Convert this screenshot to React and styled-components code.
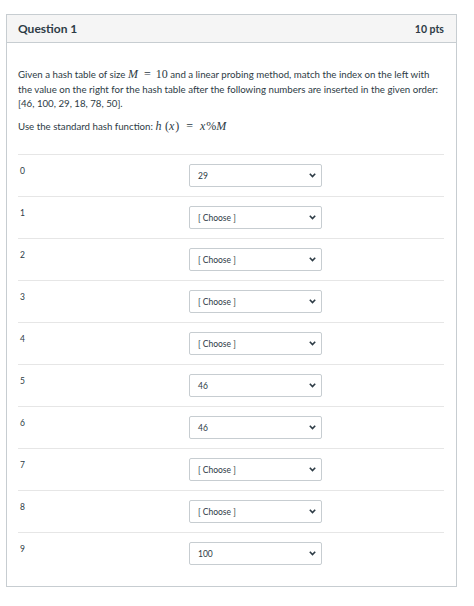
import styled, { createGlobalStyle } from "styled-components";

const Global = createGlobalStyle`
  body {
    margin: 0;
    background: #fff;
    font-family: Lato, "Open Sans", sans-serif;
    color: #2d3b45;
  }
`;

const Page = styled.div`
  padding: 14px 17px 20px 6px;
`;

const Card = styled.div`
  border: 1px solid #c7cdd1;
`;

const Header = styled.div`
  display: flex;
  justify-content: space-between;
  align-items: center;
  height: 27px;
  padding: 0 12px 0 11px;
  background: #f5f5f5;
  border-bottom: 1px solid #c7cdd1;
`;

const Title = styled.span`
  font-weight: 700;
  font-size: 12px;
`;

const Points = styled.span`
  font-weight: 700;
  font-size: 10.5px;
`;

const Body = styled.div`
  padding: 24px 12px 12px 11px;
`;

const Text = styled.p`
  margin: 0 2px 8px 0;
  font-size: 9.7px;
  line-height: 14.5px;
`;

const Math = styled.span`
  font-family: "Liberation Serif", serif;
  font-size: 12px;
  line-height: 1;
  font-style: ${(p) => (p.upright ? "normal" : "italic")};
  margin: ${(p) => (p.pad ? `0 ${p.pad}px` : p.upright ? "0" : "0 1px 0 0")};
`;

const Rows = styled.div`
  margin-top: 21px;
`;

const Row = styled.div`
  display: grid;
  grid-template-columns: 171px 133px;
  height: 42px;
  border-top: 1px solid #e6e6e6;
  box-sizing: border-box;
`;

const Label = styled.span`
  font-size: 8.5px;
  padding: 11px 0 0 2px;
`;

const SelectBox = styled.div`
  position: relative;
  margin-top: 9px;
  height: 23px;
  box-sizing: border-box;
  border: 1px solid #c7cdd1;
  border-radius: 2px;
  display: flex;
  align-items: center;
  padding-left: 8px;
  font-size: 8.5px;
  color: #2d3b45;
  background: #fff;
`;

const Chevron = styled.svg`
  position: absolute;
  right: 5px;
  top: 8px;
`;

const rows = ["29", "[ Choose ]", "[ Choose ]", "[ Choose ]", "[ Choose ]", "46", "46", "[ Choose ]", "[ Choose ]", "100"];

export default function App() {
  return (
    <Page>
      <Global />
      <Card>
        <Header>
          <Title>Question 1</Title>
          <Points>10 pts</Points>
        </Header>
        <Body>
          <Text>
            Given a hash table of size <Math>M</Math>
            <Math upright pad={5}>=</Math>
            <Math upright>10</Math> and a linear probing method, match the index on the left with the value on the right
            for the hash table after the following numbers are inserted in the given order: [46, 100, 29, 18, 78, 50].
          </Text>
          <Text>
            Use the standard hash function: <Math>h</Math> <Math upright>(</Math>
            <Math>x</Math>
            <Math upright>)</Math>
            <Math upright pad={7}>=</Math>
            <Math>x</Math>
            <Math upright>%</Math>
            <Math>M</Math>
          </Text>
          <Rows>
            {rows.map((v, i) => (
              <Row key={i}>
                <Label>{i}</Label>
                <SelectBox>
                  {v}
                  <Chevron width="7" height="5" viewBox="0 0 7 5">
                    <path d="M0.8 0.8 L3.5 3.6 L6.2 0.8" fill="none" stroke="#2d3b45" strokeWidth="1.6" />
                  </Chevron>
                </SelectBox>
              </Row>
            ))}
          </Rows>
        </Body>
      </Card>
    </Page>
  );
}
